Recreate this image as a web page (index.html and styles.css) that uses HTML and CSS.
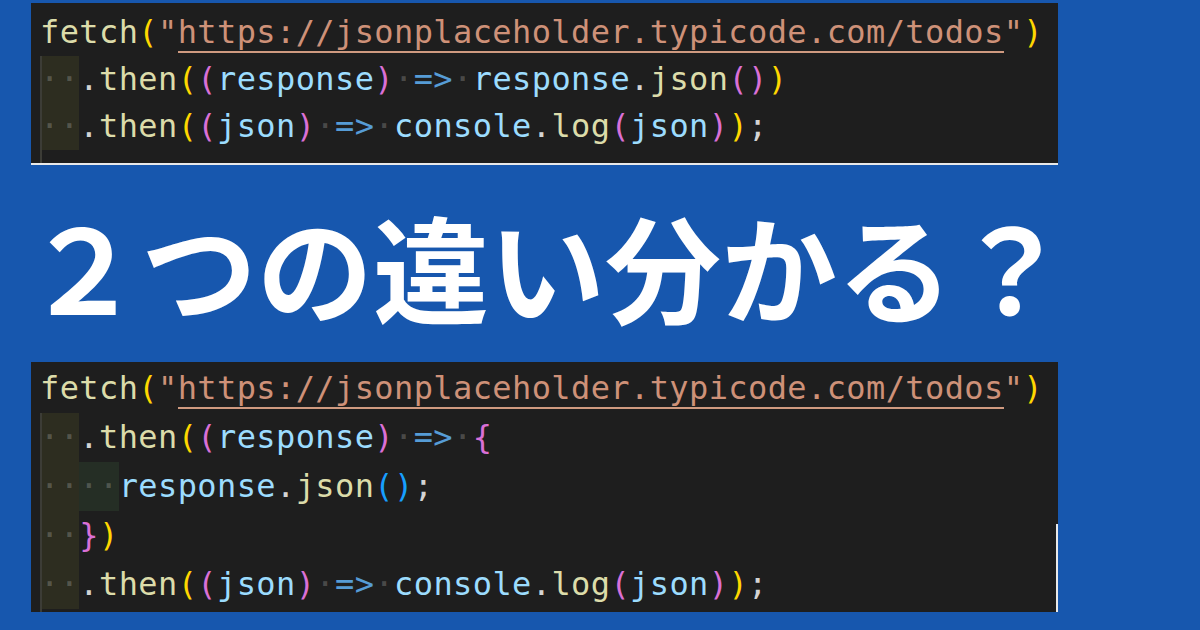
FILE: index.html
```html
<!DOCTYPE html>
<html lang="ja">
<head>
<meta charset="utf-8">
<title>２つの違い分かる？</title>
<link rel="stylesheet" href="styles.css">
</head>
<body>
<div class="page">
  <div class="code code-top">
    <div class="line"><span class="fn">fetch</span><span class="b1">(</span><span class="str">"<span class="link">https://jsonplaceholder.typicode.com/todos</span>"</span><span class="b1">)</span></div>
    <div class="line"><span class="ind i1">··</span><span class="p">.</span><span class="fn">then</span><span class="b1">(</span><span class="b2">(</span><span class="var">response</span><span class="b2">)</span><span class="ws">·</span><span class="kw">=&gt;</span><span class="ws">·</span><span class="var">response</span><span class="p">.</span><span class="fn">json</span><span class="b2">()</span><span class="b1">)</span></div>
    <div class="line"><span class="ind i1">··</span><span class="p">.</span><span class="fn">then</span><span class="b1">(</span><span class="b2">(</span><span class="var">json</span><span class="b2">)</span><span class="ws">·</span><span class="kw">=&gt;</span><span class="ws">·</span><span class="var">console</span><span class="p">.</span><span class="fn">log</span><span class="b2">(</span><span class="var">json</span><span class="b2">)</span><span class="b1">)</span><span class="p">;</span></div>
    <div class="tail"></div>
  </div>

  <h1 class="title">２つの違い分かる？</h1>

  <div class="code code-bottom">
    <div class="line"><span class="fn">fetch</span><span class="b1">(</span><span class="str">"<span class="link">https://jsonplaceholder.typicode.com/todos</span>"</span><span class="b1">)</span></div>
    <div class="line"><span class="ind i1">··</span><span class="p">.</span><span class="fn">then</span><span class="b1">(</span><span class="b2">(</span><span class="var">response</span><span class="b2">)</span><span class="ws">·</span><span class="kw">=&gt;</span><span class="ws">·</span><span class="b2">{</span></div>
    <div class="line"><span class="ind i1">··</span><span class="ind i2">··</span><span class="var">response</span><span class="p">.</span><span class="fn">json</span><span class="b3">()</span><span class="p">;</span></div>
    <div class="line"><span class="ind i1">··</span><span class="b2">}</span><span class="b1">)</span></div>
    <div class="line"><span class="ind i1">··</span><span class="p">.</span><span class="fn">then</span><span class="b1">(</span><span class="b2">(</span><span class="var">json</span><span class="b2">)</span><span class="ws">·</span><span class="kw">=&gt;</span><span class="ws">·</span><span class="var">console</span><span class="p">.</span><span class="fn">log</span><span class="b2">(</span><span class="var">json</span><span class="b2">)</span><span class="b1">)</span><span class="p">;</span></div>
    <div class="tail"></div>
  </div>
</div>
</body>
</html>
```

FILE: styles.css
```css
* {
  box-sizing: border-box;
}

html, body {
  margin: 0;
  padding: 0;
}

body {
  width: 1200px;
  height: 630px;
  overflow: hidden;
  background: #1757ae;
}

.page {
  padding-top: 3px;
  display: flex;
  flex-direction: column;
}

.code {
  margin-left: 31px;
  width: 1027px;
  background: #1e1e1e;
  padding-left: 9px;
  display: flex;
  flex-direction: column;
  font-family: "DejaVu Sans Mono", "Liberation Mono", monospace;
  font-size: 32px;
  letter-spacing: 0.4px;
  color: #d4d4d4;
  white-space: pre;
  position: relative;
}

.code-top {
  height: 162px;
  padding-top: 6px;
  border-bottom: 2px solid #e9e9e9;
}

.code-top .line {
  height: 47px;
  line-height: 47px;
}

.code-bottom {
  margin-top: 40px;
  height: 250px;
  padding-top: 2px;
}

.code-bottom .line {
  height: 49px;
  line-height: 49px;
}

.code-bottom::after {
  content: "";
  position: absolute;
  right: 0;
  top: 162px;
  bottom: 0;
  width: 2px;
  background: #e9e9e9;
}

.tail {
  flex: 1;
  width: 19px;
  box-shadow: inset 2px 0 0 #3c3c36;
}

.fn { color: #dcdcaa; }
.var { color: #9cdcfe; }
.kw { color: #569cd6; }
.str { color: #ce9178; }
.p { color: #d4d4d4; }
.b1 { color: #ffd700; }
.b2 { color: #da70d6; }
.b3 { color: #179fff; }
.ws { color: rgba(227, 228, 226, 0.24); }

.link {
  border-bottom: 2px solid #cf9a80;
}

.ind {
  display: inline-block;
  color: rgba(227, 228, 226, 0.24);
}

.i1 {
  background: #2d2d20;
  box-shadow: inset 2px 0 0 #3c3c36;
}

.i2 {
  background: #252e25;
}

.title {
  margin: 41px 0 0 0;
  padding-left: 25px;
  height: 116px;
  font-family: "Noto Sans CJK JP", "Noto Sans CJK SC", sans-serif;
  font-weight: 700;
  font-size: 116px;
  letter-spacing: 0;
  line-height: 116px;
  color: #ffffff;
  white-space: nowrap;
}
```
